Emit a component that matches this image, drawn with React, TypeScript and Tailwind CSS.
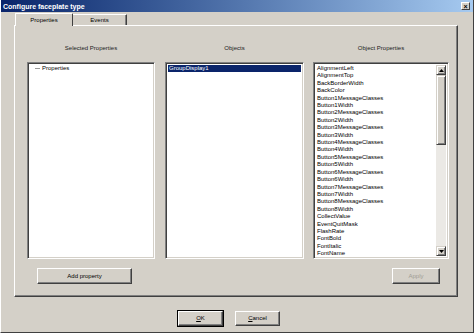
import React from 'react';

const objectProps = [
  'AlignmentLeft',
  'AlignmentTop',
  'BackBorderWidth',
  'BackColor',
  'Button1MessageClasses',
  'Button1Width',
  'Button2MessageClasses',
  'Button2Width',
  'Button3MessageClasses',
  'Button3Width',
  'Button4MessageClasses',
  'Button4Width',
  'Button5MessageClasses',
  'Button5Width',
  'Button6MessageClasses',
  'Button6Width',
  'Button7MessageClasses',
  'Button7Width',
  'Button8MessageClasses',
  'Button8Width',
  'CollectValue',
  'EventQuitMask',
  'FlashRate',
  'FontBold',
  'FontItalic',
  'FontName',
  'FontSize',
];

// classic raised 3D button
function WinButton({ label, className, disabled }: { label: React.ReactNode; className: string; disabled?: boolean }) {
  return (
    <button
      className={`flex items-center justify-center bg-[#d4d0c8] border-t border-l border-t-white border-l-white border-r border-b border-r-[#404040] border-b-[#404040] shadow-[inset_-1px_-1px_0_#808080] text-[6px] ${
        disabled ? 'text-[#a09c94]' : 'text-black'
      } ${className}`}
    >
      {label}
    </button>
  );
}

function SunkenBox({ className, children }: { className: string; children?: React.ReactNode }) {
  return (
    <div
      className={`bg-white border-t border-l border-t-[#808080] border-l-[#808080] border-r border-b border-r-white border-b-white shadow-[inset_1px_1px_0_#404040,inset_-1px_-1px_0_#d4d0c8] ${className}`}
    >
      {children}
    </div>
  );
}

export default function App() {
  return (
    <div className="w-[474px] h-[333px] bg-[#d4d0c8] flex flex-col overflow-hidden font-['Liberation_Sans',Arial,sans-serif] text-[6px] text-black border-l border-l-white border-r border-b border-r-[#404040] border-b-[#404040]">
      {/* Title bar */}
      <div className="h-[12px] flex-shrink-0 flex items-center justify-between pl-[2px] pr-[3px] bg-gradient-to-r from-[#0a246a] to-[#a6caf0]">
        <span className="text-white font-bold text-[7px] leading-none">Configure faceplate type</span>
        <div className="w-[9px] h-[8px] flex items-center justify-center bg-[#d4d0c8] border-t border-l border-t-white border-l-white border-r border-b border-r-[#404040] border-b-[#404040] text-[7px] font-bold leading-none">
          ×
        </div>
      </div>

      {/* Tabs */}
      <div className="h-[13px] flex-shrink-0 flex items-end pl-[14px]">
        <div className="relative z-10 -mb-[1px] h-[13px] w-[58px] flex items-center justify-center bg-[#d4d0c8] border-t border-l border-t-white border-l-white border-r border-r-[#404040] rounded-t-[1px]">
          Properties
        </div>
        <div className="h-[11px] w-[54px] flex items-center justify-center bg-[#d4d0c8] border-t border-t-white border-r border-r-[#404040] shadow-[inset_-1px_0_0_#808080]">
          Events
        </div>
      </div>

      {/* Tab panel */}
      <div className="ml-[13px] w-[444px] h-[272px] flex-shrink-0 flex flex-col border-t border-l border-t-white border-l-white border-r border-b border-r-[#404040] border-b-[#404040] shadow-[inset_-1px_-1px_0_#808080]">
        <div className="flex gap-[10px] pl-[12px] pt-[19px]">
          {/* Selected properties */}
          <div className="w-[128px] flex flex-col">
            <div className="h-[7px] leading-[7px] text-center text-[#222]">Selected Properties</div>
            <SunkenBox className="mt-[10px] h-[197px] pl-[7px] pt-[2px]">
              <div className="flex items-center gap-[2px] leading-[7px]">
                <span className="w-[5px] h-[1px] bg-[#9a9a9a]" />
                <span>Properties</span>
              </div>
            </SunkenBox>
            <WinButton label="Add property" className="mt-[9px] ml-[10px] w-[95px] h-[16px]" />
          </div>

          {/* Objects */}
          <div className="w-[139px] flex flex-col">
            <div className="h-[7px] leading-[7px] text-center text-[#222]">Objects</div>
            <SunkenBox className="mt-[10px] h-[197px] p-[2px]">
              <div className="bg-[#0a246a] text-white leading-[7px] pl-[1px]">GroupDisplay1</div>
            </SunkenBox>
          </div>

          {/* Object properties */}
          <div className="w-[136px] ml-[-1px] flex flex-col">
            <div className="h-[7px] leading-[7px] text-center text-[#222]">Object Properties</div>
            <SunkenBox className="mt-[10px] h-[197px] flex overflow-hidden p-[2px] pr-[2px]">
              <div className="flex-1 overflow-hidden pl-[1px]">
                {objectProps.map(p => (
                  <div key={p} className="leading-[7.4px] whitespace-nowrap">
                    {p}
                  </div>
                ))}
              </div>
              {/* scrollbar */}
              <div className="w-[10px] flex flex-col bg-[#ebe9e5]">
                <div className="h-[10px] flex items-center justify-center bg-[#d4d0c8] border-t border-l border-t-[#d4d0c8] border-l-[#d4d0c8] border-r border-b border-r-[#404040] border-b-[#404040] shadow-[inset_1px_1px_0_white,inset_-1px_-1px_0_#808080]">
                  <svg width="5" height="3" viewBox="0 0 5 3"><path d="M2.5 0L5 3H0z" fill="#000" /></svg>
                </div>
                <div className="h-[70px] bg-[#d4d0c8] border-t border-l border-t-[#d4d0c8] border-l-[#d4d0c8] border-r border-b border-r-[#404040] border-b-[#404040] shadow-[inset_1px_1px_0_white,inset_-1px_-1px_0_#808080]" />
                <div className="flex-1" />
                <div className="h-[10px] flex items-center justify-center bg-[#d4d0c8] border-t border-l border-t-[#d4d0c8] border-l-[#d4d0c8] border-r border-b border-r-[#404040] border-b-[#404040] shadow-[inset_1px_1px_0_white,inset_-1px_-1px_0_#808080]">
                  <svg width="5" height="3" viewBox="0 0 5 3"><path d="M0 0H5L2.5 3z" fill="#000" /></svg>
                </div>
              </div>
            </SunkenBox>
            <div className="flex justify-end pr-[9px]">
              <WinButton label="Apply" disabled className="mt-[9px] w-[48px] h-[16px]" />
            </div>
          </div>
        </div>
      </div>

      {/* Dialog buttons */}
      <div className="flex gap-[12px] pl-[177px] pt-[14px]">
        <WinButton label={<span><u>O</u>K</span>} className="w-[45px] h-[15px] outline outline-1 outline-black" />
        <WinButton label={<span><u>C</u>ancel</span>} className="w-[45px] h-[15px]" />
      </div>
    </div>
  );
}
